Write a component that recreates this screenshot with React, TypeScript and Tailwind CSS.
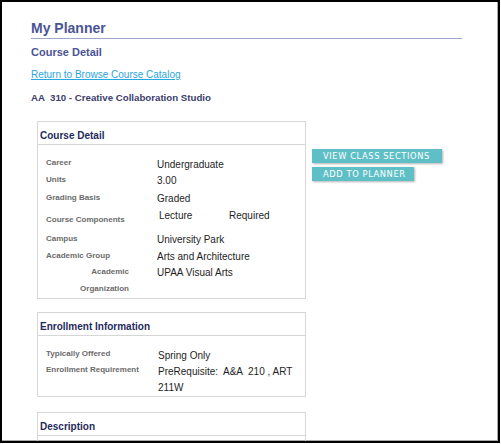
import React from "react";

const sans = { fontFamily: '"Liberation Sans", Arial, sans-serif' };

function Label({ children, h }: { children: React.ReactNode; h: string }) {
  return <div className={`w-[111px] shrink-0 text-[8px] font-bold text-[#6b6b6b] ${h}`}>{children}</div>;
}

export default function App() {
  return (
    <div className="w-[501px] h-[444px] bg-white" style={sans}>
      <div className="w-[500px] h-[443px] border-2 border-black overflow-hidden">
        <div className="h-full pl-[29px] pr-[36px] pt-[17px] shadow-[inset_-1px_-1px_0_#a8a8a8]">
          <div className="text-[14px] leading-[18px] font-bold text-[#4b5495] pb-[1px] border-b border-[#9ea5cb]">My Planner</div>
          <div className="mt-[7px] text-[11px] leading-[13px] font-bold text-[#4b5495]">Course Detail</div>
          <div className="mt-[10px] text-[10px] leading-[12px]">
            <a className="text-[#2aa6e0] underline underline-offset-1">Return to Browse Course Catalog</a>
          </div>
          <div className="mt-[11px] text-[9.7px] leading-[11px] font-bold text-[#3b406d] whitespace-pre">AA  310 - Creative Collaboration Studio</div>

          <div className="mt-[18px] ml-[6px] flex items-start gap-[6px]">
            <div className="w-[269px] shrink-0">
              {/* Course Detail box */}
              <div className="border border-[#d6d6d6]">
                <div className="pt-[8px] pb-[2px] pl-[2px] text-[10px] leading-[12px] font-bold text-[#1f2a5c] border-b border-[#d6d6d6]">Course Detail</div>
                <div className="pt-[9px] pb-[1px] pl-[8px] text-[10px] text-[#1e1e1e]">
                  <div className="flex h-[17px]">
                    <Label h="leading-[17px]">Career</Label>
                    <div className="pt-[2px] leading-[17px]">Undergraduate</div>
                  </div>
                  <div className="flex h-[18px]">
                    <Label h="leading-[18px]">Units</Label>
                    <div className="pt-[1px] leading-[18px]">3.00</div>
                  </div>
                  <div className="flex h-[18px]">
                    <Label h="leading-[18px]">Grading Basis</Label>
                    <div className="pt-[1px] leading-[18px]">Graded</div>
                  </div>
                  <div className="flex h-[22px] items-start">
                    <Label h="pt-[7px] leading-[12px]">Course Components</Label>
                    <div className="pt-[3px] pl-[2px] leading-[12px] flex">
                      <span className="w-[70px]">Lecture</span>
                      <span>Required</span>
                    </div>
                  </div>
                  <div className="flex h-[19px]">
                    <Label h="leading-[19px]">Campus</Label>
                    <div className="pt-[1px] leading-[19px]">University Park</div>
                  </div>
                  <div className="flex h-[16px]">
                    <Label h="leading-[16px]">Academic Group</Label>
                    <div className="pt-[1px] leading-[16px]">Arts and Architecture</div>
                  </div>
                  <div className="flex items-start">
                    <div className="w-[111px] shrink-0">
                      <div className="w-[83px] text-right text-[8px] font-bold text-[#6b6b6b] leading-[16.5px]">
                        Academic
                        <br />
                        Organization
                      </div>
                    </div>
                    <div className="pt-[1px] leading-[16.5px]">UPAA Visual Arts</div>
                  </div>
                </div>
              </div>

              {/* Enrollment box */}
              <div className="mt-[13px] border border-[#d6d6d6]">
                <div className="pt-[8px] pb-[2px] pl-[2px] text-[10px] leading-[12px] font-bold text-[#1f2a5c] border-b border-[#d6d6d6]">Enrollment Information</div>
                <div className="pt-[10px] pl-[8px] text-[10px] text-[#1e1e1e]">
                  <div className="flex h-[16px]">
                    <div className="w-[112px] shrink-0 text-[8px] font-bold text-[#6b6b6b] leading-[16px]">Typically Offered</div>
                    <div className="pt-[2px] leading-[16px]">Spring Only</div>
                  </div>
                  <div className="flex items-start">
                    <div className="w-[112px] shrink-0 text-[8px] font-bold text-[#6b6b6b] leading-[16px]">Enrollment Requirement</div>
                    <div className="pt-[2px] leading-[16px] whitespace-pre">
                      {"PreRequisite:  A&A  210 , ART"}
                      <br />
                      {"211W"}
                    </div>
                  </div>
                </div>
              </div>

              {/* Description box */}
              <div className="mt-[15px] border border-[#d6d6d6] h-[80px]">
                <div className="pt-[8px] pb-[2px] pl-[2px] text-[10px] leading-[12px] font-bold text-[#1f2a5c] border-b border-[#d6d6d6]">Description</div>
              </div>
            </div>

            <div className="mt-[28px] flex flex-col gap-[4px]" style={{ fontFamily: '"DejaVu Sans", Verdana, sans-serif' }}>
              <button className="w-[130px] h-[14px] pl-[11px] flex items-center bg-[#5fbfc6] text-white text-[8.3px] tracking-[0.6px] shadow-[1px_1px_2px_rgba(0,0,0,0.3)]">VIEW CLASS SECTIONS</button>
              <button className="w-[102px] h-[14px] pl-[11px] flex items-center bg-[#5fbfc6] text-white text-[8.3px] tracking-[0.6px] shadow-[1px_1px_2px_rgba(0,0,0,0.3)]">ADD TO PLANNER</button>
            </div>
          </div>
        </div>
      </div>
    </div>
  );
}
